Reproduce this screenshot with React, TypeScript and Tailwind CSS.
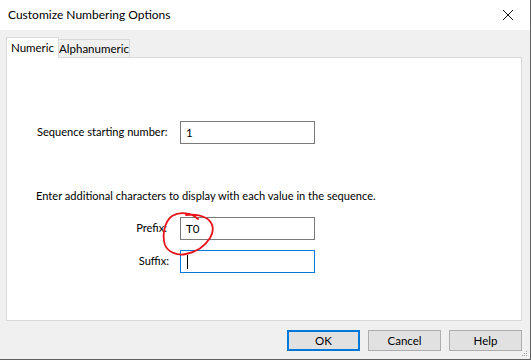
import React from 'react'

const font = { fontFamily: 'Lato, "Noto Sans", "Liberation Sans", sans-serif' }

function Field({ value, focused }: { value?: string; focused?: boolean }) {
  return (
    <div
      className={
        'h-[23px] w-[135px] shrink-0 bg-white border flex items-center px-[5px] text-[11.5px] text-black ' +
        (focused ? 'border-[#0078d7]' : 'border-[#7a7a7a]')
      }
    >
      {value}
      {focused && <span className="w-px h-[14px] bg-black ml-[1px]" />}
    </div>
  )
}

function Button({ label, primary }: { label: string; primary?: boolean }) {
  return (
    <button
      className={
        'w-[73px] h-[21px] bg-[#e1e1e1] text-[11.5px] text-black flex items-center justify-center ' +
        (primary ? 'border-2 border-[#0078d7]' : 'border border-[#adadad]')
      }
    >
      {label}
    </button>
  )
}

export default function App() {
  return (
    <div className="w-[531px] h-[360px] bg-[#f0f0f0] flex flex-col border-r border-b border-[#5f5f5f] relative whitespace-nowrap" style={font}>
      {/* Title bar */}
      <div className="h-[30px] bg-white flex items-center justify-between pl-[8px] pr-[14px] shrink-0">
        <span className="text-[12px] text-black">Customize Numbering Options</span>
        <svg width="12" height="12" viewBox="0 0 12 12" className="mr-[2px]">
          <path d="M1 1 L11 11 M11 1 L1 11" stroke="#111" strokeWidth="1" />
        </svg>
      </div>

      {/* Tabs */}
      <div className="pl-[6px] pr-[8px] pt-[7px] flex flex-col">
        <div className="flex items-end h-[20px]">
          <div className="h-[21px] w-[53px] bg-white border border-b-0 border-[#d9d9d9] text-[11.5px] text-black flex items-center justify-center relative top-[1px] z-10">
            Numeric
          </div>
          <div className="h-[18px] w-[71px] bg-[#f0f0f0] border border-l-0 border-b-0 border-[#d9d9d9] text-[11.5px] text-black flex items-center justify-center">
            Alphanumeric
          </div>
        </div>
        <div className="h-[264px] bg-white border border-[#d9d9d9] flex flex-col text-[11.1px] text-black">
          <div className="flex items-center mt-[63px] pl-[30px]">
            <span className="w-[143px]">Sequence starting number:</span>
            <Field value="1" />
          </div>
          <div className="mt-[44px] pl-[29px] leading-[16px]">Enter additional characters to display with each value in the sequence.</div>
          <div className="flex items-center mt-[13px]">
            <span className="w-[161px] text-right pr-[1px]">Prefix:</span>
            <span className="w-[12px]" />
            <Field value="T0" />
          </div>
          <div className="flex items-center mt-[10px]">
            <span className="w-[162px] text-right">Suffix:</span>
            <span className="w-[11px]" />
            <Field focused />
          </div>
        </div>
      </div>

      {/* Buttons */}
      <div className="flex justify-end gap-[8px] pr-[8px] pt-[9px]">
        <Button label="OK" primary />
        <Button label="Cancel" />
        <Button label="Help" />
      </div>

      {/* Resize grip */}
      <svg width="7" height="7" viewBox="0 0 7 7" className="absolute right-[2px] bottom-[2px]">
        <rect x="5" y="1" width="1" height="1" fill="#a0a0a0" />
        <rect x="3" y="3" width="1" height="1" fill="#a0a0a0" />
        <rect x="5" y="3" width="1" height="1" fill="#a0a0a0" />
        <rect x="1" y="5" width="1" height="1" fill="#a0a0a0" />
        <rect x="3" y="5" width="1" height="1" fill="#a0a0a0" />
        <rect x="5" y="5" width="1" height="1" fill="#a0a0a0" />
      </svg>

      {/* Red hand-drawn annotation */}
      <svg width="531" height="360" className="absolute left-0 top-0 pointer-events-none">
        <path
          d="M198 219 C192 213 180 211 172 216 C164 222 162 236 165 245 C168 252 177 256 186 254 C196 252 205 246 210 238 C215 230 213 222 206 218 C200 215 193 214 186 215"
          fill="none"
          stroke="#e8141a"
          strokeWidth="1.8"
          strokeLinecap="round"
        />
      </svg>
    </div>
  )
}
